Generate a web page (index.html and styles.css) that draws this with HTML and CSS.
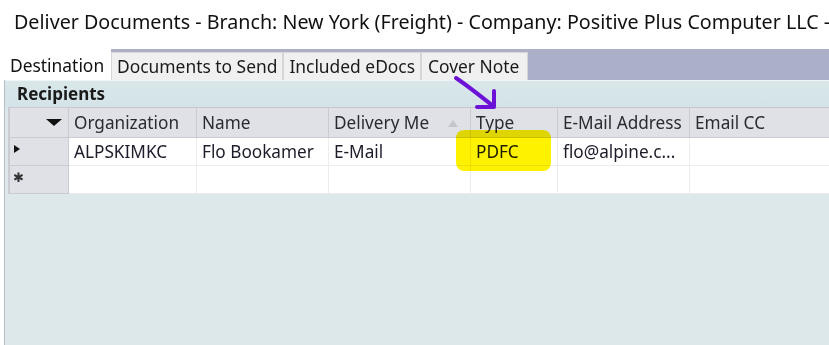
FILE: index.html
```html
<!DOCTYPE html>
<html lang="en">
<head>
  <meta charset="UTF-8">
  <title>Deliver Documents</title>
  <link rel="stylesheet" href="styles.css">
</head>
<body>

  <div class="title">Deliver Documents - Branch: New York (Freight) - Company: Positive Plus Computer LLC -</div>

  <!-- Tabs -->
  <div class="tabs">
    <div class="tab active">Destination</div>
    <div class="tab">Documents to Send</div>
    <div class="tab">Included eDocs</div>
    <div class="tab last">Cover Note</div>
  </div>

  <div class="panel">
    <div class="section">Recipients</div>

    <div class="gridwrap">
      <table class="grid">
        <colgroup>
          <col class="c-hdr"><col class="c-org"><col class="c-name"><col class="c-del">
          <col class="c-type"><col class="c-mail"><col class="c-cc">
        </colgroup>
        <tr class="head">
          <th class="rowhdr"><span class="drop"></span></th>
          <th>Organization</th>
          <th>Name</th>
          <th class="sorted">Delivery Me<span class="sort"></span></th>
          <th>Type</th>
          <th>E-Mail Address</th>
          <th>Email CC</th>
        </tr>
        <tr>
          <td class="rowhdr"><span class="current"></span></td>
          <td>ALPSKIMKC</td>
          <td>Flo Bookamer</td>
          <td>E-Mail</td>
          <td>PDFC</td>
          <td>flo@alpine.c...</td>
          <td></td>
        </tr>
        <tr>
          <td class="rowhdr"><span class="newrow">✱</span></td>
          <td></td><td></td><td></td><td></td><td></td><td></td>
        </tr>
      </table>
    </div>

    <!-- hand-drawn annotations -->
    <div class="marker"></div>
    <svg class="arrow" width="60" height="40" viewBox="0 0 60 40">
      <path d="M4 2 C 16 10, 26 18, 41 30" fill="none" stroke="#6b12d6" stroke-width="4" stroke-linecap="round"/>
      <path d="M42 15 L 42 31 L 25 31" fill="none" stroke="#6b12d6" stroke-width="4" stroke-linecap="round" stroke-linejoin="round"/>
    </svg>
  </div>

</body>
</html>
```

FILE: styles.css
```css
body {
  margin: 0;
  font-family: "Noto Sans", "Open Sans", sans-serif;
  background: #fff;
  width: 829px;
  height: 345px;
  overflow: hidden;
}

.title {
  height: 49px;
  padding-left: 14px;
  font-size: 19.7px;
  line-height: 44px;
  color: #111;
  white-space: nowrap;
}

.tabs {
  display: flex;
  align-items: flex-end;
  height: 31px;
  margin-left: 3px;
  background: #abafc7;
}

.tab {
  height: 28px;
  padding: 0 5px;
  background: #f0f0f0;
  border: 1px solid #d6d6d6;
  border-bottom: none;
  font-size: 17.4px;
  line-height: 26px;
  color: #1a1a1a;
  box-sizing: border-box;
  white-space: nowrap;
}

.tab.last {
  padding: 0 8px 0 6px;
}

.tab.active {
  height: 31px;
  width: 108px;
  padding: 0 6px;
  background: #fff;
  border-color: #fff;
  line-height: 30px;
  color: #111;
}

.panel {
  position: relative;
  height: 265px;
  margin-left: 4px;
  border-left: 1px solid #b6bcc4;
  background: #dce8e9;
}

.section {
  height: 27px;
  padding-left: 12px;
  background: linear-gradient(#d9e7eb, #d4e3e7);
  border-top: 1px solid #eef5f6;
  font-size: 17px;
  font-weight: bold;
  line-height: 26px;
  color: #1a1a1a;
  box-sizing: border-box;
}

.gridwrap {
  margin-left: 3px;
  border-left: 1px solid #c9ccd3;
  overflow: hidden;
}

.grid {
  border-collapse: collapse;
  table-layout: fixed;
  width: 830px;
  font-size: 17.2px;
  color: #1c1c2a;
}

.c-hdr { width: 59px; }
.c-org { width: 128px; }
.c-name { width: 132px; }
.c-del { width: 142px; }
.c-type { width: 87px; }
.c-mail { width: 132px; }
.c-cc { width: 150px; }

.grid th,
.grid td {
  padding: 0 5px;
  text-align: left;
  font-weight: normal;
  white-space: nowrap;
  overflow: hidden;
}

.grid th {
  height: 29px;
  background: #dfe1e6;
  border: 1px solid #c8cbd2;
  border-top-color: #c4c7ce;
  color: #2a2a34;
}

.grid td {
  height: 27px;
  background: #fff;
  border: 1px solid #ececee;
  border-top: none;
}

.grid .rowhdr {
  position: relative;
  background: #dfe1e6;
  border-color: #c8cbd2;
}

.drop {
  position: absolute;
  right: 6px;
  top: 11px;
  border-left: 8px solid transparent;
  border-right: 8px solid transparent;
  border-top: 7px solid #111;
}

.current {
  position: absolute;
  left: 4px;
  top: 7px;
  border-top: 4px solid transparent;
  border-bottom: 4px solid transparent;
  border-left: 6px solid #111;
}

.newrow {
  position: absolute;
  left: 3px;
  top: 2px;
  font-size: 13px;
  color: #333;
}

.sorted {
  position: relative;
}

.sort {
  position: absolute;
  right: 12px;
  top: 12px;
  border-left: 5px solid transparent;
  border-right: 5px solid transparent;
  border-bottom: 7px solid #c4c6cc;
}

.marker {
  position: absolute;
  left: 451px;
  top: 50px;
  width: 95px;
  height: 41px;
  border-radius: 8px;
  background: #fff200;
  mix-blend-mode: multiply;
}

.arrow {
  position: absolute;
  left: 447px;
  top: -4px;
  overflow: visible;
}
```
